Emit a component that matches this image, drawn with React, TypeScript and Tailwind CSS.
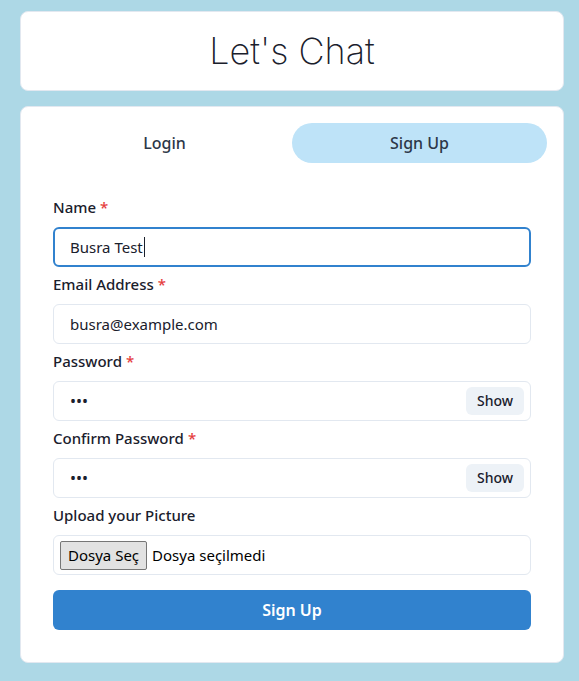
import { useState } from "react";

const font = { fontFamily: '"Noto Sans", "Open Sans", sans-serif' };

function Label({ text, required }: { text: string; required?: boolean }) {
  return (
    <label className="block mb-2 text-[15px] leading-6 font-medium text-[#1a202c]">
      {text}
      {required && <span className="ml-1 text-[#e53e3e]">*</span>}
    </label>
  );
}

function PasswordField({ value }: { value: string }) {
  return (
    <div className="relative w-full">
      <input
        type="password"
        readOnly
        value={value}
        className="w-full h-10 pl-4 pr-[72px] rounded-md border border-[#e2e8f0] text-base text-[#1a202c] outline-none"
      />
      <div className="absolute right-0 top-0 h-10 w-[72px] flex items-center justify-center">
        <button className="h-7 w-[58px] rounded-md bg-[#edf2f7] text-sm font-medium text-[#1a202c]">
          Show
        </button>
      </div>
    </div>
  );
}

export default function App() {
  const [tab, setTab] = useState<"login" | "signup">("signup");

  return (
    <div className="min-h-screen bg-[#add8e6] pl-[20px] pr-[15px] pt-[11px] pb-4" style={font}>
      {/* Header */}
      <div className="bg-white rounded-lg border border-[#e2e8f0] p-3 flex justify-center">
        <h1
          className="text-[36px] leading-[54px] font-extralight text-[#1a202c]"
          style={{ fontFamily: '"Inter", "Lato", sans-serif' }}
        >
          Let's Chat
        </h1>
      </div>

      {/* Auth card */}
      <div className="mt-[15px] bg-white rounded-lg border border-[#e2e8f0] p-4">
        <div className="flex mb-4">
          <button
            onClick={() => setTab("login")}
            className={`flex-1 h-10 rounded-full text-base font-medium text-[#2d3748] ${
              tab === "login" ? "bg-[#bee3f8]" : ""
            }`}
          >
            Login
          </button>
          <button
            onClick={() => setTab("signup")}
            className={`flex-1 h-10 rounded-full text-base font-medium text-[#2d3748] ${
              tab === "signup" ? "bg-[#bee3f8]" : ""
            }`}
          >
            Sign Up
          </button>
        </div>

        <div className="p-4 flex flex-col gap-[5px]">
          <div>
            <Label text="Name" required />
            <div className="w-full h-10 rounded-md border-2 border-[#3182ce] pl-[15px] flex items-center text-[15px] text-[#1a202c]">
              Busra Test<span className="w-px h-5 bg-[#1a202c] ml-px" />
            </div>
          </div>

          <div>
            <Label text="Email Address" required />
            <input
              type="email"
              readOnly
              value="busra@example.com"
              className="w-full h-10 px-4 rounded-md border border-[#e2e8f0] text-[15px] text-[#1a202c] outline-none"
            />
          </div>

          <div>
            <Label text="Password" required />
            <PasswordField value="123" />
          </div>

          <div>
            <Label text="Confirm Password" required />
            <PasswordField value="123" />
          </div>

          <div>
            <Label text="Upload your Picture" />
            <div className="w-full h-10 rounded-md border border-[#e2e8f0] pl-[6px] flex items-center text-[15px] text-black">
              <span className="h-[29px] px-[7px] flex items-center border border-[#767676] rounded-[2px] bg-[#e2e2e2]">
                Dosya Seç
              </span>
              <span className="ml-[5px]">Dosya seçilmedi</span>
            </div>
          </div>

          <button className="mt-[10px] w-full h-10 rounded-md bg-[#3182ce] text-white text-base font-semibold">
            Sign Up
          </button>
        </div>
      </div>
    </div>
  );
}
